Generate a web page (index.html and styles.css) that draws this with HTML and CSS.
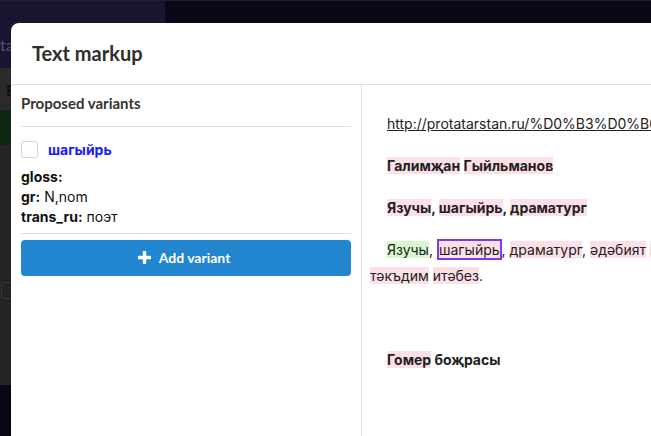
FILE: index.html
```html
<!DOCTYPE html>
<html lang="tt">
<head>
<meta charset="utf-8">
<title>Text markup</title>
<link rel="stylesheet" href="styles.css">
</head>
<body>
<div class="backdrop">
  <div class="bd-top"><span class="bd-top-light">ta</span></div>
  <div class="bd-gray"><span class="bd-letter">E</span></div>
  <div class="bd-green"></div>
  <div class="bd-dark"><span class="bd-box"></span></div>
  <div class="bd-bottom"></div>
</div>

<div class="modal">
  <div class="modal-header">Text markup</div>
  <div class="modal-body">
    <div class="variants">
      <div class="variants-title">Proposed variants</div>
      <div class="variant">
        <div class="variant-row">
          <span class="checkbox"></span>
          <span class="variant-word">шагыйрь</span>
        </div>
        <div class="variant-info">
          <div><b>gloss:</b></div>
          <div><b>gr:</b> N,nom</div>
          <div><b>trans_ru:</b> поэт</div>
        </div>
      </div>
      <button class="add-btn" type="button">
        <svg class="plus" width="13" height="13" viewBox="0 0 13 13"><path d="M6.5 1v11M1 6.5h11" stroke="#fff" stroke-width="3.4" stroke-linecap="round"/></svg>
        <span>Add variant</span>
      </button>
    </div>
    <div class="text-pane">
      <p><a class="link" href="#">http://protatarstan.ru/%D0%B3%D0%B0%D0%BB%D0%B8%D0%BC</a></p>
      <p class="bold"><span class="w">Галимҗан</span> <span class="w">Гыйльманов</span></p>
      <p class="bold"><span class="w">Язучы</span>, <span class="w">шагыйрь</span>, <span class="w">драматург</span></p>
      <p><span class="w ok">Язучы</span>, <span class="w sel">шагыйрь</span>, <span class="w">драматург</span>, <span class="w">әдәбият</span> <span class="w">галиме</span> <span class="w">Галимҗан</span> <span class="w">Гыйльманов</span> <span class="w">иҗаты</span><br><span class="w">тәкъдим</span> <span class="w">итәбез</span>.</p>
      <p class="empty"></p>
      <p class="bold"><span class="w">Гомер</span> боҗрасы</p>
    </div>
  </div>
</div>
</body>
</html>
```

FILE: styles.css
```css
html, body {
  margin: 0;
  padding: 0;
  width: 651px;
  height: 436px;
  overflow: hidden;
  background: #080818;
}

.backdrop {
  display: flex;
  flex-direction: column;
  height: 436px;
  font-family: "Lato", sans-serif;
}

.bd-top {
  height: 67px;
  border-top: 1px solid #202020;
  background: #080818;
  display: flex;
}

.bd-top-light {
  width: 165px;
  background: #17152f;
  color: #55546a;
  font-size: 16px;
  padding-top: 34px;
  box-sizing: border-box;
}

.bd-gray {
  height: 42px;
  background: #2a2a2a;
  display: flex;
  align-items: center;
}

.bd-letter {
  color: #101010;
  font-weight: 700;
  font-size: 16px;
  padding-left: 6px;
}

.bd-green {
  height: 35px;
  background: #0d2710;
}

.bd-dark {
  height: 240px;
  background: #242424;
  display: flex;
  flex-direction: column;
}

.bd-box {
  margin-top: 137px;
  margin-left: 1px;
  width: 20px;
  height: 15px;
  border: 1px solid #383838;
  border-radius: 3px;
}

.bd-bottom {
  flex: 1;
  background: #070716;
}

.modal {
  position: absolute;
  left: 11px;
  top: 23px;
  width: 900px;
  height: 520px;
  background: #fff;
  border-radius: 8px 8px 0 0;
  display: flex;
  flex-direction: column;
}

.modal-header {
  border-bottom: 1px solid #dedede;
  padding-left: 21px;
  padding-bottom: 1px;
  box-sizing: border-box;
  height: 62px;
  display: flex;
  align-items: center;
  font-family: "Lato", sans-serif;
  font-weight: 700;
  font-size: 20px;
  color: #2e2e2e;
}

.modal-body {
  display: flex;
  flex: 1;
}

.variants {
  width: 330px;
  padding: 0 10px;
  border-right: 1px solid #dedede;
}

.variants-title {
  font-family: "Lato", sans-serif;
  font-weight: 700;
  font-size: 15px;
  line-height: 20px;
  color: #333;
  padding: 8px 0 13px;
  border-bottom: 1px solid #dedede;
}

.variant {
  padding-top: 12px;
  padding-bottom: 6px;
  border-bottom: 1px solid #dedede;
}

.variant-row {
  display: flex;
  align-items: center;
  gap: 10px;
  height: 20px;
}

.checkbox {
  width: 15px;
  height: 15px;
  border: 1px solid #d4d4d5;
  border-radius: 3px;
  background: #fff;
}

.variant-word {
  font-family: "Inter", sans-serif;
  font-weight: 700;
  font-size: 14px;
  color: #1a1aff;
}

.variant-info {
  margin-top: 8px;
  font-family: "Inter", sans-serif;
  font-size: 14px;
  line-height: 20px;
  color: #111;
}

.variant-info b {
  font-weight: 700;
}

.add-btn {
  margin-top: 6px;
  width: 330px;
  height: 36px;
  border: 0;
  border-radius: 4px;
  background: #2185d0;
  color: #fff;
  font-family: "Lato", sans-serif;
  font-weight: 700;
  font-size: 14px;
  display: flex;
  align-items: center;
  justify-content: center;
  gap: 8px;
  padding: 0 4px 1px 0;
}

.text-pane {
  flex: 1;
  padding: 26px 0 0 8px;
  font-family: "Inter", sans-serif;
  font-size: 14px;
  color: #222;
}

.text-pane p {
  margin: 0 0 16px;
  line-height: 26px;
  text-indent: 17px;
  white-space: nowrap;
}

.text-pane p.empty {
  height: 26px;
}

.text-pane .bold {
  font-weight: 700;
}

.link {
  color: #222;
  text-decoration: underline;
}

.w {
  background: #fde0e7;
}

.w.ok {
  background: #d6f7d0;
}

.w.sel {
  border: 2px solid #7c3aed;
  padding: 0;
}
```
